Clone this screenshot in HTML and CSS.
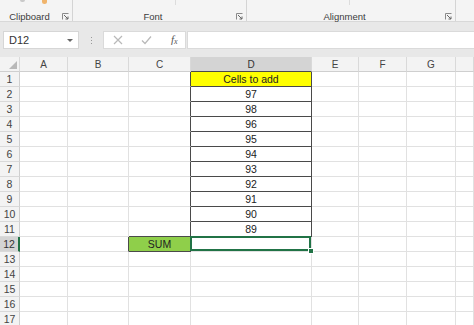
FILE: index.html
```html
<!DOCTYPE html>
<html lang="en">
<head>
  <meta charset="UTF-8">
  <title>Sum cells</title>
  <link rel="stylesheet" href="styles.css">
</head>
<body>
  <div class="ribbon">
    <div class="group clipboard">
      <div class="tips"><span class="tip-gray"></span><span class="tip-orange"></span></div>
      <div class="label">Clipboard</div>
      <svg class="launcher" width="7" height="7" viewBox="0 0 7 7"><path d="M0.5 6.5V0.5H6.5" fill="none" stroke="#8a8a8a"/><path d="M2 2L6 6M6 3.5V6H3.5" fill="none" stroke="#666"/></svg>
    </div>
    <div class="group font">
      <div class="tips"><span class="tip-line"></span></div>
      <div class="label">Font</div>
      <svg class="launcher" width="7" height="7" viewBox="0 0 7 7"><path d="M0.5 6.5V0.5H6.5" fill="none" stroke="#8a8a8a"/><path d="M2 2L6 6M6 3.5V6H3.5" fill="none" stroke="#666"/></svg>
    </div>
    <div class="group align">
      <div class="tips"><span class="tip-line"></span></div>
      <div class="label">Alignment</div>
      <svg class="launcher" width="7" height="7" viewBox="0 0 7 7"><path d="M0.5 6.5V0.5H6.5" fill="none" stroke="#8a8a8a"/><path d="M2 2L6 6M6 3.5V6H3.5" fill="none" stroke="#666"/></svg>
    </div>
  </div>

  <div class="formula-bar">
    <div class="name-box">D12<span class="arrow"></span></div>
    <div class="grip"><span></span><span></span><span></span></div>
    <div class="fx-box">
      <svg width="10" height="10" viewBox="0 0 10 10"><path d="M1 1L9 9M9 1L1 9" stroke="#b9b9b9" stroke-width="1.2"/></svg>
      <svg width="11" height="10" viewBox="0 0 11 10"><path d="M1 5.5L4 8.5L10 1.5" fill="none" stroke="#b9b9b9" stroke-width="1.2"/></svg>
      <span class="fx">f<span class="fx-x">x</span></span>
    </div>
    <div class="formula-input"></div>
  </div>

  <div class="sheet">
    <div class="row head">
      <div class="c corner"><svg width="8" height="8" viewBox="0 0 8 8"><path d="M8 0V8H0Z" fill="#b8b8b8"/></svg></div>
      <div class="c">A</div><div class="c">B</div><div class="c">C</div><div class="c sel-col">D</div><div class="c">E</div><div class="c">F</div><div class="c">G</div><div class="c"></div>
    </div>
    <div class="row"><div class="c rh">1</div><div class="c"></div><div class="c"></div><div class="c edge"></div><div class="c box title">Cells to add</div><div class="c"></div><div class="c"></div><div class="c"></div><div class="c"></div></div>
    <div class="row"><div class="c rh">2</div><div class="c"></div><div class="c"></div><div class="c edge"></div><div class="c box">97</div><div class="c"></div><div class="c"></div><div class="c"></div><div class="c"></div></div>
    <div class="row"><div class="c rh">3</div><div class="c"></div><div class="c"></div><div class="c edge"></div><div class="c box">98</div><div class="c"></div><div class="c"></div><div class="c"></div><div class="c"></div></div>
    <div class="row"><div class="c rh">4</div><div class="c"></div><div class="c"></div><div class="c edge"></div><div class="c box">96</div><div class="c"></div><div class="c"></div><div class="c"></div><div class="c"></div></div>
    <div class="row"><div class="c rh">5</div><div class="c"></div><div class="c"></div><div class="c edge"></div><div class="c box">95</div><div class="c"></div><div class="c"></div><div class="c"></div><div class="c"></div></div>
    <div class="row"><div class="c rh">6</div><div class="c"></div><div class="c"></div><div class="c edge"></div><div class="c box">94</div><div class="c"></div><div class="c"></div><div class="c"></div><div class="c"></div></div>
    <div class="row"><div class="c rh">7</div><div class="c"></div><div class="c"></div><div class="c edge"></div><div class="c box">93</div><div class="c"></div><div class="c"></div><div class="c"></div><div class="c"></div></div>
    <div class="row"><div class="c rh">8</div><div class="c"></div><div class="c"></div><div class="c edge"></div><div class="c box">92</div><div class="c"></div><div class="c"></div><div class="c"></div><div class="c"></div></div>
    <div class="row"><div class="c rh">9</div><div class="c"></div><div class="c"></div><div class="c edge"></div><div class="c box">91</div><div class="c"></div><div class="c"></div><div class="c"></div><div class="c"></div></div>
    <div class="row"><div class="c rh">10</div><div class="c"></div><div class="c"></div><div class="c edge"></div><div class="c box">90</div><div class="c"></div><div class="c"></div><div class="c"></div><div class="c"></div></div>
    <div class="row"><div class="c rh">11</div><div class="c"></div><div class="c"></div><div class="c edge under"></div><div class="c box">89</div><div class="c"></div><div class="c"></div><div class="c"></div><div class="c"></div></div>
    <div class="row"><div class="c rh sel-row">12</div><div class="c"></div><div class="c edge"></div><div class="c sum">SUM</div><div class="c active"><span class="handle"></span></div><div class="c"></div><div class="c"></div><div class="c"></div><div class="c"></div></div>
    <div class="row"><div class="c rh">13</div><div class="c"></div><div class="c"></div><div class="c"></div><div class="c"></div><div class="c"></div><div class="c"></div><div class="c"></div><div class="c"></div></div>
    <div class="row"><div class="c rh">14</div><div class="c"></div><div class="c"></div><div class="c"></div><div class="c"></div><div class="c"></div><div class="c"></div><div class="c"></div><div class="c"></div></div>
    <div class="row"><div class="c rh">15</div><div class="c"></div><div class="c"></div><div class="c"></div><div class="c"></div><div class="c"></div><div class="c"></div><div class="c"></div><div class="c"></div></div>
    <div class="row"><div class="c rh">16</div><div class="c"></div><div class="c"></div><div class="c"></div><div class="c"></div><div class="c"></div><div class="c"></div><div class="c"></div><div class="c"></div></div>
    <div class="row"><div class="c rh">17</div><div class="c"></div><div class="c"></div><div class="c"></div><div class="c"></div><div class="c"></div><div class="c"></div><div class="c"></div><div class="c"></div></div>
  </div>
</body>
</html>
```

FILE: styles.css
```css
:root {
  --grid: #e1e1e1;
  --dark: #4a4a4a;
  --green: #217346;
  --head-bg: #f3f3f3;
}

body {
  margin: 0;
  width: 474px;
  height: 325px;
  overflow: hidden;
  background-color: #e8e8e8;
  font-family: 'Liberation Sans', Arial, sans-serif;
  color: #222;
}

/* ribbon */
.ribbon {
  display: flex;
  height: 21px;
  background-color: #f4f4f4;
  border-bottom: 1px solid #d8d8d8;
}

.group {
  position: relative;
  box-sizing: border-box;
  border-right: 1px solid #d4d4d4;
  padding-right: 13px;
}

.clipboard { width: 73px; }
.font { width: 174px; }
.align { width: 209px; }

.tips {
  height: 12px;
  display: flex;
}

.tip-gray {
  width: 5px;
  height: 2px;
  margin-left: 20px;
  background-color: #c9c9c9;
  border-radius: 0 0 3px 3px;
}

.tip-orange {
  width: 5px;
  height: 4px;
  margin-left: 17px;
  background-color: #f0b46c;
  border-radius: 0 0 3px 3px;
}

.tip-line {
  width: 1px;
  height: 5px;
  margin-left: 102px;
  background-color: #dcdcdc;
}

.label {
  font-size: 9.5px;
  line-height: 9px;
  color: #3c3c3c;
  text-align: center;
}

.launcher {
  position: absolute;
  right: 3px;
  top: 13px;
}

/* formula bar */
.formula-bar {
  display: flex;
  align-items: stretch;
  height: 18px;
  padding: 9px 0 8px 3px;
}

.name-box {
  position: relative;
  width: 76px;
  box-sizing: border-box;
  background-color: #fff;
  border: 1px solid #d6d6d6;
  font-size: 11px;
  line-height: 16px;
  padding-left: 5px;
  color: #333;
}

.arrow {
  position: absolute;
  right: 5px;
  top: 7px;
  border-left: 3px solid transparent;
  border-right: 3px solid transparent;
  border-top: 3px solid #666;
}

.grip {
  width: 24px;
  display: flex;
  flex-direction: column;
  align-items: center;
  justify-content: center;
  gap: 2px;
}

.grip span {
  width: 1px;
  height: 1px;
  background-color: #999;
}

.fx-box {
  width: 83px;
  box-sizing: border-box;
  background-color: #fff;
  border: 1px solid #dadada;
  display: flex;
  align-items: center;
  gap: 18px;
  padding-left: 9px;
  margin-right: 1px;
}

.fx {
  font-family: 'Liberation Serif', serif;
  font-style: italic;
  font-size: 11px;
  line-height: 12px;
  color: #555;
  margin-left: 1px;
}

.fx-x {
  font-size: 8px;
  position: relative;
  top: 1px;
}

.formula-input {
  flex: 1;
  background-color: #fff;
  border: 1px solid #dadada;
  border-right: none;
}

/* sheet */
.sheet {
  background-color: #fff;
}

.row {
  display: grid;
  grid-template-columns: 20px 48px 61px 62px 121px 47px 48px 49px 18px;
  height: 15px;
}

.c {
  box-sizing: border-box;
  border-right: 1px solid var(--grid);
  border-bottom: 1px solid var(--grid);
  font-size: 10.5px;
  line-height: 15px;
  text-align: center;
  white-space: nowrap;
  overflow: hidden;
}

.head .c {
  background-color: var(--head-bg);
  border-right-color: #d9d9d9;
  border-bottom-color: #cfcfcf;
  font-size: 10px;
  color: #444;
}

.head .corner {
  display: flex;
  align-items: flex-end;
  justify-content: flex-end;
  padding: 0 2px 2px 0;
}

.head .sel-col {
  background-color: #d4d4d4;
  border-bottom-color: var(--dark);
  color: #333;
}

.rh {
  background-color: var(--head-bg);
  border-right-color: #cfcfcf;
  border-bottom-color: #d9d9d9;
  font-size: 10.5px;
  color: #444;
}

.sel-row {
  background-color: #d4d4d4;
  border-right: 2px solid var(--green);
  color: #333;
}

.edge { border-right-color: var(--dark); }
.under { border-bottom-color: var(--dark); }

.box {
  border-right-color: var(--dark);
  border-bottom-color: var(--dark);
}

.title {
  background-color: #ffff00;
}

.sum {
  background-color: #8fcf4a;
  border-right-color: var(--dark);
  border-bottom-color: var(--dark);
}

.active {
  position: relative;
  overflow: visible;
}

.active::after {
  content: "";
  position: absolute;
  top: -1px;
  left: -1px;
  right: 0;
  bottom: 0;
  border: 2px solid var(--green);
}

.handle {
  position: absolute;
  right: -3px;
  bottom: -3px;
  width: 4px;
  height: 4px;
  background-color: var(--green);
  border: 1px solid #fff;
  z-index: 1;
}
```
